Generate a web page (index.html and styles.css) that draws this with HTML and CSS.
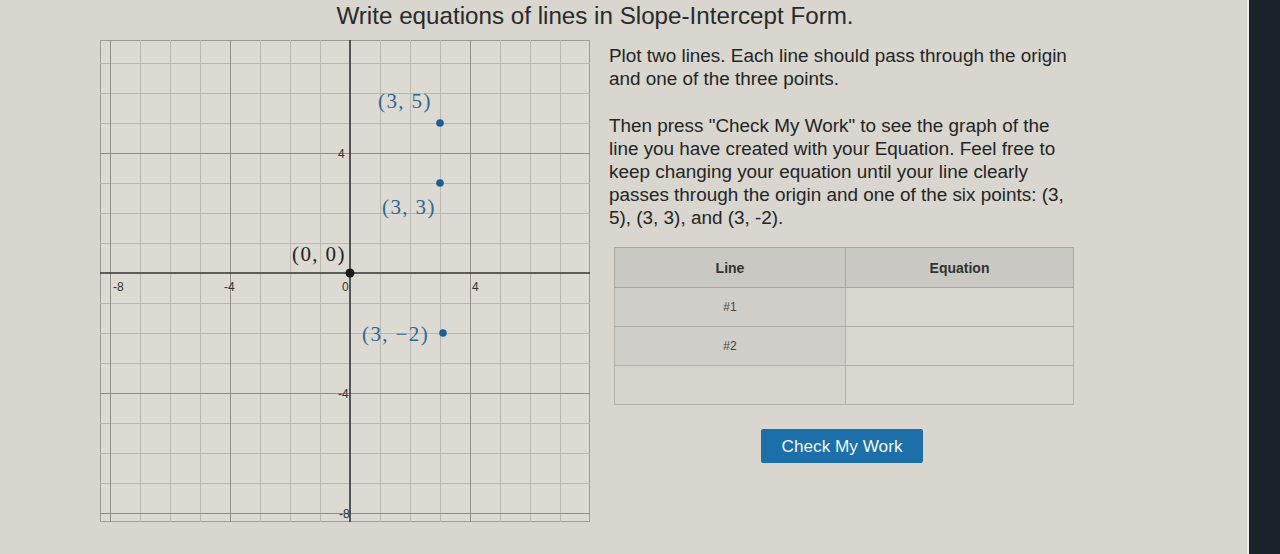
FILE: index.html
```html
<!DOCTYPE html>
<html>
<head>
<meta charset="utf-8">
<link rel="stylesheet" href="styles.css">
</head>
<body>
<div class="screen">
  <div class="page">
    <h1 class="title">Write equations of lines in Slope-Intercept Form.</h1>
    <div class="content">
      <div class="graph">
        <svg width="490" height="482" viewBox="0 0 490 482" xmlns="http://www.w3.org/2000/svg">
          <rect x="0.5" y="0.5" width="489" height="481" fill="#dcdad3" stroke="#9c9c98" stroke-width="1"/>
          <g stroke="#b9b8b2" stroke-width="1">
            <line x1="40.5" y1="0" x2="40.5" y2="482"/>
            <line x1="70.5" y1="0" x2="70.5" y2="482"/>
            <line x1="100.5" y1="0" x2="100.5" y2="482"/>
            <line x1="160.5" y1="0" x2="160.5" y2="482"/>
            <line x1="190.5" y1="0" x2="190.5" y2="482"/>
            <line x1="220.5" y1="0" x2="220.5" y2="482"/>
            <line x1="280.5" y1="0" x2="280.5" y2="482"/>
            <line x1="310.5" y1="0" x2="310.5" y2="482"/>
            <line x1="340.5" y1="0" x2="340.5" y2="482"/>
            <line x1="400.5" y1="0" x2="400.5" y2="482"/>
            <line x1="430.5" y1="0" x2="430.5" y2="482"/>
            <line x1="460.5" y1="0" x2="460.5" y2="482"/>
            <line x1="0" y1="23.5" x2="490" y2="23.5"/>
            <line x1="0" y1="53.5" x2="490" y2="53.5"/>
            <line x1="0" y1="83.5" x2="490" y2="83.5"/>
            <line x1="0" y1="143.5" x2="490" y2="143.5"/>
            <line x1="0" y1="173.5" x2="490" y2="173.5"/>
            <line x1="0" y1="203.5" x2="490" y2="203.5"/>
            <line x1="0" y1="263.5" x2="490" y2="263.5"/>
            <line x1="0" y1="293.5" x2="490" y2="293.5"/>
            <line x1="0" y1="323.5" x2="490" y2="323.5"/>
            <line x1="0" y1="383.5" x2="490" y2="383.5"/>
            <line x1="0" y1="413.5" x2="490" y2="413.5"/>
            <line x1="0" y1="443.5" x2="490" y2="443.5"/>
          </g>
          <g stroke="#8f8e8a" stroke-width="1">
            <line x1="10.5" y1="0" x2="10.5" y2="482"/>
            <line x1="130.5" y1="0" x2="130.5" y2="482"/>
            <line x1="370.5" y1="0" x2="370.5" y2="482"/>
            <line x1="0" y1="113.5" x2="490" y2="113.5"/>
            <line x1="0" y1="353.5" x2="490" y2="353.5"/>
            <line x1="0" y1="473.5" x2="490" y2="473.5"/>
          </g>
          <g stroke="#333" stroke-width="1.6">
            <line x1="250" y1="0" x2="250" y2="482"/>
            <line x1="0" y1="233" x2="490" y2="233"/>
          </g>
          <g class="tick" font-family="Liberation Sans, Arial, sans-serif" font-size="12" fill="#333">
            <text x="13" y="251">-8</text>
            <text x="124" y="251">-4</text>
            <text x="242" y="251">0</text>
            <text x="372" y="251">4</text>
            <text x="238" y="118">4</text>
            <text x="238" y="358">-4</text>
            <text x="239" y="478">-8</text>
          </g>
          <g class="math" font-family="Liberation Serif, Times New Roman, serif" font-size="21" letter-spacing="1.4">
            <text x="278" y="68" fill="#2f6795">(3, 5)</text>
            <text x="282" y="174" fill="#2f6795">(3, 3)</text>
            <text x="192" y="221" fill="#222">(0, 0)</text>
            <text x="262" y="301" fill="#2f6795">(3, −2)</text>
          </g>
          <circle cx="340" cy="83" r="3.8" fill="#1f5e95"/>
          <circle cx="340" cy="143" r="3.8" fill="#1f5e95"/>
          <circle cx="343" cy="293" r="3.8" fill="#1f5e95"/>
          <circle cx="250" cy="233" r="4.5" fill="#1a1a1a"/>
        </svg>
      </div>
      <div class="panel">
        <p class="para">Plot two lines. Each line should pass through the origin and one of the three points.</p>
        <p class="para">Then press "Check My Work" to see the graph of the line you have created with your Equation. Feel free to keep changing your equation until your line clearly passes through the origin and one of the six points: (3, 5), (3, 3), and (3, -2).</p>
        <table class="eq-table">
          <thead>
            <tr><th class="col-line">Line</th><th class="col-eq">Equation</th></tr>
          </thead>
          <tbody>
            <tr><td class="cell-line">#1</td><td class="cell-eq"></td></tr>
            <tr><td class="cell-line">#2</td><td class="cell-eq"></td></tr>
            <tr><td class="cell-blank"></td><td class="cell-eq"></td></tr>
          </tbody>
        </table>
        <div class="actions">
          <button class="check-btn">Check My Work</button>
        </div>
      </div>
    </div>
  </div>
  <div class="bezel"></div>
</div>
</body>
</html>
```
FILE: styles.css
```css
html, body {
  margin: 0;
  padding: 0;
  height: 554px;
  overflow: hidden;
}
body {
  font-family: "Liberation Sans", Arial, sans-serif;
  color: #222;
}
.screen {
  display: flex;
  height: 554px;
  background: #d8d6cf;
}
.page {
  flex: 1;
  padding-left: 100px;
}
.bezel {
  width: 31px;
  background: #1b2229;
  border-left: 2px solid #eeeeea;
}
.title {
  width: 990px;
  margin: 0;
  padding-top: 2px;
  height: 38px;
  text-align: center;
  font-weight: normal;
  font-size: 24.2px;
  line-height: 28px;
  color: #2a2a2a;
}
.content {
  display: flex;
  gap: 19px;
  align-items: flex-start;
}
.graph {
  width: 490px;
  height: 482px;
}
.graph svg {
  display: block;
}
.panel {
  width: 472px;
  padding-top: 4px;
}
.para {
  margin: 0 0 24px 0;
  font-size: 18.9px;
  line-height: 23px;
  color: #252525;
}
.para + .para {
  margin-bottom: 18px;
}
.eq-table {
  margin-left: 5px;
  width: 460px;
  border-collapse: collapse;
  font-size: 12px;
}
.eq-table th {
  height: 39px;
  background: #c9c8c2;
  font-weight: bold;
  font-size: 14px;
  color: #333;
  border: 1px solid #a8a7a2;
  padding: 0;
}
.col-line {
  width: 230px;
}
.eq-table td {
  height: 38px;
  border: 1px solid #b1b0aa;
  padding: 0;
  text-align: center;
  color: #444;
}
.cell-line {
  background: #d0cec8;
}
.cell-blank {
  background: #d6d4cd;
}
.cell-eq {
  background: #d9d7d0;
}
.actions {
  display: flex;
  justify-content: center;
  padding-right: 6px;
  margin-top: 24px;
}
.check-btn {
  width: 162px;
  height: 34px;
  border: none;
  border-radius: 2px;
  background: #1c6fa8;
  color: #f3f6f8;
  font-family: "Liberation Sans", Arial, sans-serif;
  font-size: 17.2px;
  padding: 0;
}
```
